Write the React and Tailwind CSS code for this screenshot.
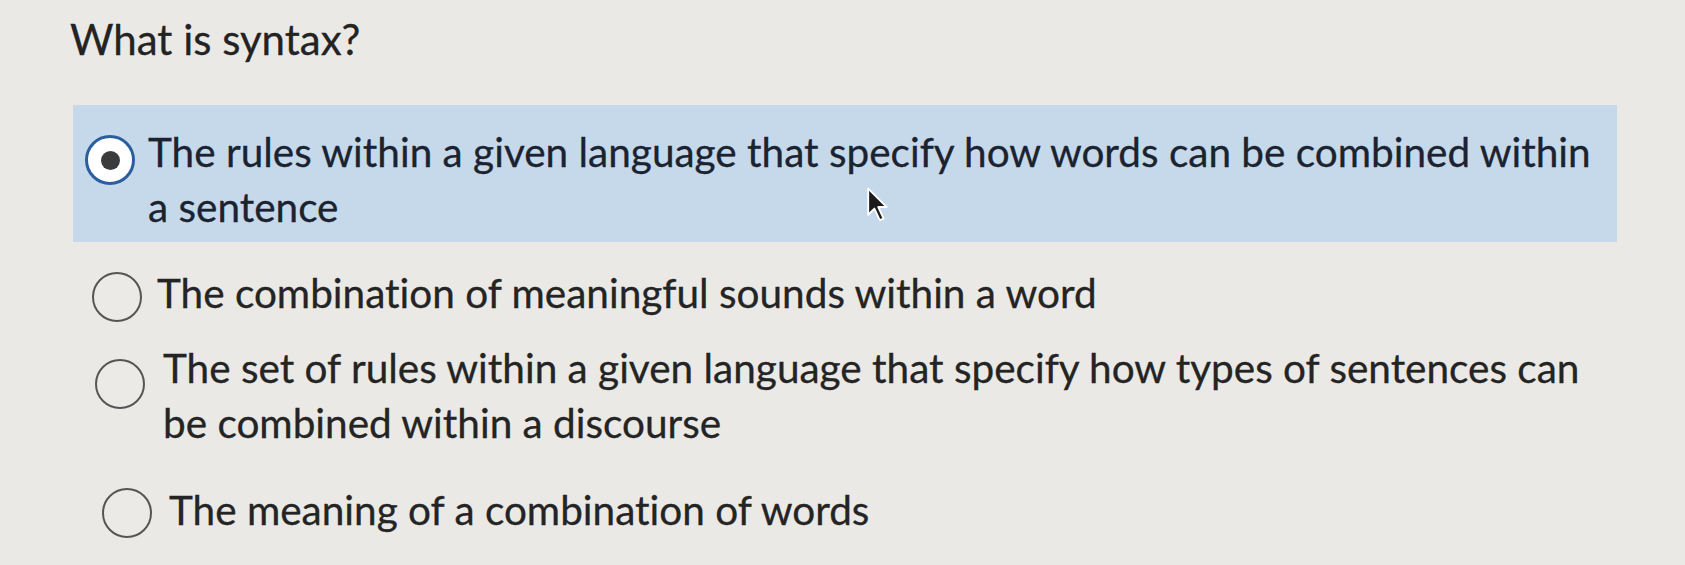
import { useState } from 'react';

const OPTIONS = [
  {
    id: 'a',
    lines: ['The rules within a given language that specify how words can be combined within', 'a sentence'],
    // tiny per-row offsets so the rows line up with the photo
    pl: 'pl-[12px]', gap: 'gap-[13px]', radioTop: 'mt-[11px]', mt: 'mt-0',
  },
  {
    id: 'b',
    lines: ['The combination of meaningful sounds within a word'],
    pl: 'pl-[19px]', gap: 'gap-[15px]', radioTop: 'mt-[7px]', mt: 'mt-[23px]',
  },
  {
    id: 'c',
    lines: ['The set of rules within a given language that specify how types of sentences can', 'be combined within a discourse'],
    pl: 'pl-[22px]', gap: 'gap-[18px]', radioTop: 'mt-[19px]', mt: 'mt-[18px]',
  },
  {
    id: 'd',
    lines: ['The meaning of a combination of words'],
    pl: 'pl-[29px]', gap: 'gap-[17px]', radioTop: 'mt-[6px]', mt: 'mt-[32px]',
  },
];

function Radio({ checked }) {
  if (checked) {
    return (
      <span className="w-[50px] h-[50px] rounded-full border-[3px] border-[#2a5e9f] bg-white flex items-center justify-center">
        <span className="block w-[19px] h-[19px] rounded-full bg-[#3a3b3d]" />
      </span>
    );
  }
  return <span className="block w-[50px] h-[50px] rounded-full border-[2.5px] border-[#555555] bg-[#eceae7]" />;
}

function Cursor() {
  return (
    <svg className="absolute left-[866px] top-[187px]" width="26" height="37" viewBox="0 0 16 24">
      <path d="M1 1 L1 18 L5 14 L8.5 21.5 L11 20.5 L7.5 13 L13 13 Z" fill="#1b1b1b" stroke="#ffffff" strokeWidth="1.2" strokeLinejoin="round" />
    </svg>
  );
}

export default function App() {
  const [selected, setSelected] = useState('a');

  return (
    <div className="relative min-h-[565px] w-full overflow-hidden bg-[#eae9e5] pt-[15px] pl-[70px] pr-[68px] font-['Lato','Noto_Sans',sans-serif] text-[#242424] [font-variant-ligatures:none]">
      <h1 className="text-[42px] leading-[48px] font-normal text-[#232323] [-webkit-text-stroke:0.3px]">What is syntax?</h1>

      <div className="mt-[42px] ml-[3px] flex flex-col">
        {OPTIONS.map((o) => {
          const isSel = selected === o.id;
          return (
            <label
              key={o.id}
              onClick={() => setSelected(o.id)}
              className={`flex items-start cursor-pointer ${o.pl} ${o.gap} ${o.mt} ${
                isSel ? 'bg-[#c6d9ea] pt-[19px] pb-[8px] text-[#1b2331]' : ''
              }`}
            >
              <span className={`block flex-shrink-0 ${o.radioTop}`}>
                <Radio checked={isSel} />
              </span>
              <span className="text-[40.5px] leading-[55px] whitespace-nowrap [-webkit-text-stroke:0.3px]">
                {o.lines.map((l, i) => (
                  <span key={i} className="block">{l}</span>
                ))}
              </span>
            </label>
          );
        })}
      </div>

      <Cursor />
    </div>
  );
}
